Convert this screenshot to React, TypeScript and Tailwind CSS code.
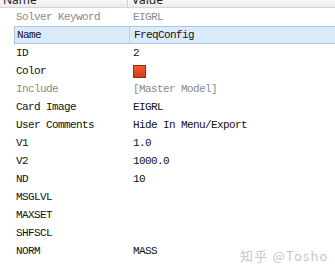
import React from 'react';

type Row = { label: string; value?: string; muted?: boolean; selected?: boolean; swatch?: boolean };

const rows: Row[] = [
  { label: 'Solver Keyword', value: 'EIGRL', muted: true },
  { label: 'Name', value: 'FreqConfig', selected: true },
  { label: 'ID', value: '2' },
  { label: 'Color', swatch: true },
  { label: 'Include', value: '[Master Model]', muted: true },
  { label: 'Card Image', value: 'EIGRL' },
  { label: 'User Comments', value: 'Hide In Menu/Export' },
  { label: 'V1', value: '1.0' },
  { label: 'V2', value: '1000.0' },
  { label: 'ND', value: '10' },
  { label: 'MSGLVL' },
  { label: 'MAXSET' },
  { label: 'SHFSCL' },
  { label: 'NORM', value: 'MASS' },
];

const mono = { fontFamily: '"Liberation Mono", "DejaVu Sans Mono", monospace' };
const head = { fontFamily: '"Noto Sans", sans-serif', fontSize: 12, letterSpacing: 0 };

export default function App() {
  return (
    <div className="relative w-[335px] h-[276px] overflow-hidden bg-white text-[11px] tracking-[-0.6px]" style={mono}>
      <div className="flex h-[8px] overflow-hidden bg-gradient-to-b from-[#f7f7f7] to-[#ececec] border-b border-[#d5d5d5] text-[#222]">
        <div className="w-[128px] h-full border-r border-[#d0d0d0] relative">
          <span className="absolute left-[3px] bottom-[1px] leading-none" style={head}>Name</span>
        </div>
        <div className="flex-1 h-full relative">
          <span className="absolute left-[4px] bottom-[1px] leading-none" style={head}>Value</span>
        </div>
      </div>
      <div className="flex flex-col">
        {rows.map((r) => (
          <div
            key={r.label}
            className={`flex h-[18px] items-center ml-[14px] ${
              r.selected ? 'bg-[#dcebfa] border-y border-[#a9c6e4] border-l' : ''
            } ${r.muted ? 'text-[#8a8a8a]' : 'text-[#111]'}`}
          >
            <div className={`w-[115px] h-full flex items-center pl-[2px] ${r.selected ? 'border-r border-[#b8d0ea]' : ''}`}>
              {r.label}
            </div>
            <div className="flex-1 h-full flex items-center pl-[4px]">
              {r.swatch ? (
                <span className="block w-[13px] h-[13px] bg-gradient-to-b from-[#f45a30] to-[#d8361a] border border-[#9a2a14]" />
              ) : (
                r.value
              )}
            </div>
          </div>
        ))}
      </div>
      <div
        className="absolute left-[240px] top-[248px] text-[13px] leading-[16px] text-[#c8c8c8] tracking-[1.2px]"
        style={{ fontFamily: '"Noto Sans CJK SC", "Noto Sans", sans-serif' }}
      >
        知乎 @Tosho
      </div>
    </div>
  );
}
